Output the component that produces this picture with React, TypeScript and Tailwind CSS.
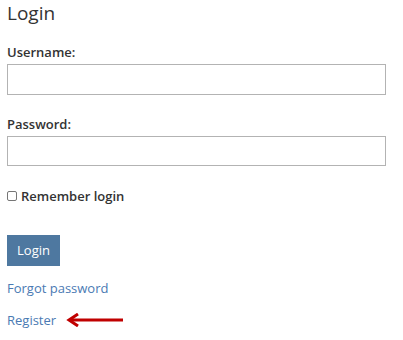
export default function App() {
  return (
    <div className="min-h-[340px] w-[403px] bg-white pl-[7px] pr-[17px] text-[#333333]" style={{ fontFamily: '"Open Sans", sans-serif' }}>
      <h1 className="pt-[1px] text-[19px] leading-[24px] font-normal">Login</h1>
      <div className="mt-[18px] text-[13px] leading-[18px] font-semibold">Username:</div>
      <div className="mt-[3px] h-[31px] w-[379px] border border-[#b3b3b3]" />
      <div className="mt-[20px] text-[13px] leading-[18px] font-semibold">Password:</div>
      <div className="mt-[3px] h-[30px] w-[379px] border border-[#b3b3b3]" />
      <div className="mt-[20px] flex items-center gap-[4px]">
        <span className="h-[10px] w-[10px] rounded-[2px] border border-[#767676]" />
        <span className="text-[13px] leading-[20px] font-semibold">Remember login</span>
      </div>
      <button className="mt-[29px] h-[31px] w-[53px] bg-[#4e78a0] text-[13px] text-white">Login</button>
      <div className="mt-[12px] text-[13px] leading-[20px] text-[#4a7ab3]">Forgot password</div>
      <div className="mt-[12px] flex items-center">
        <span className="text-[13px] leading-[20px] text-[#4a7ab3]">Register</span>
        <svg className="ml-[10px]" width="58" height="14" viewBox="0 0 58 14">
          <line x1="4" y1="7" x2="57" y2="7" stroke="#c00000" strokeWidth="3" />
          <polyline points="12,1 3,7 12,13" fill="none" stroke="#c00000" strokeWidth="3" />
        </svg>
      </div>
    </div>
  );
}
